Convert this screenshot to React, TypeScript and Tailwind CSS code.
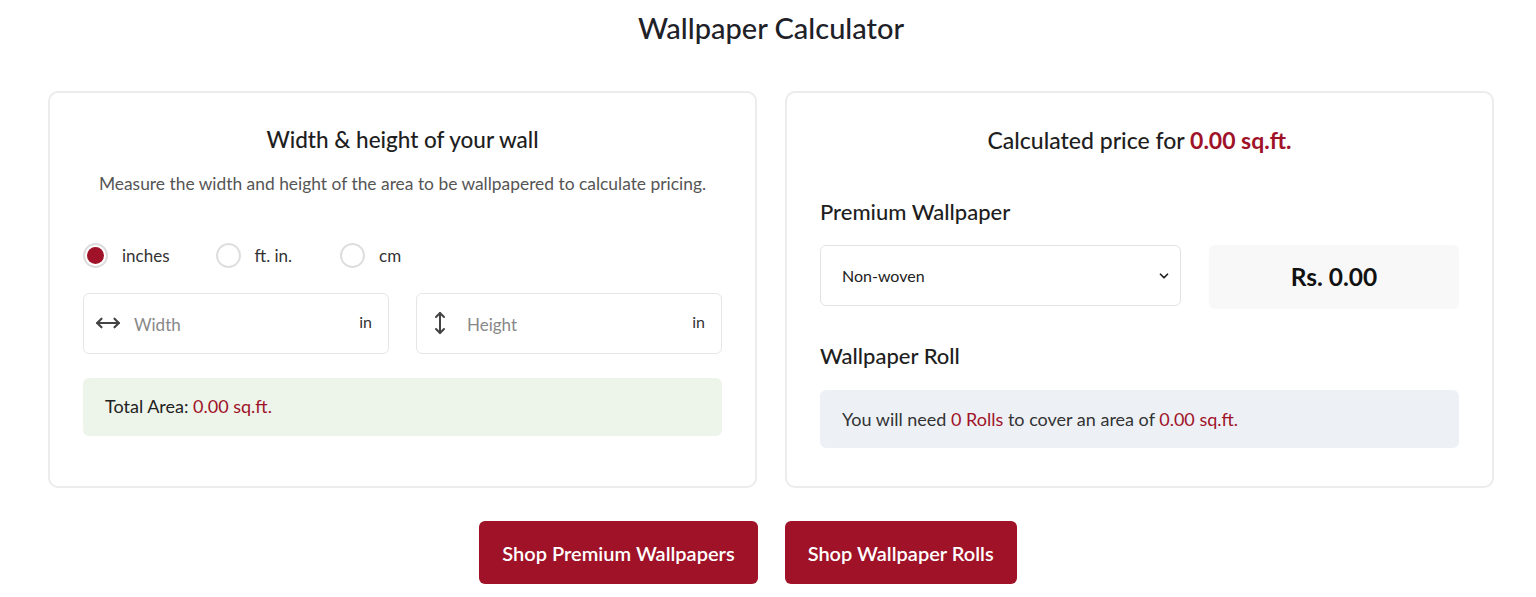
import { MoveHorizontal, MoveVertical, ChevronDown } from 'lucide-react'

const RED = 'text-[#a01228]'

function Radio({ label, checked }: { label: string; checked?: boolean }) {
  return (
    <label className="flex items-center gap-[14px]">
      <span
        className={`w-[25px] h-[25px] rounded-full border-2 flex items-center justify-center ${
          checked ? 'border-[#dcdcdc]' : 'border-[#dedede]'
        }`}
      >
        {checked && <span className="w-[17px] h-[17px] rounded-full bg-[#a01228]" />}
      </span>
      <span className="text-[17px] text-[#333]">{label}</span>
    </label>
  )
}

function DimInput({ placeholder, vertical }: { placeholder: string; vertical?: boolean }) {
  const Icon = vertical ? MoveVertical : MoveHorizontal
  return (
    <div className="flex-1 h-[61px] rounded-md border border-[#e6e6e6] flex items-center pl-[11px] pr-[16px]">
      <Icon className={vertical ? 'w-[24px] h-[24px] text-[#444]' : 'w-[26px] h-[26px] text-[#444]'} strokeWidth={2} />
      <span className={`text-[17px] text-[#888] ${vertical ? 'ml-[15px]' : 'ml-[13px]'} mt-[3px]`}>{placeholder}</span>
      <span className="ml-auto text-[16px] text-[#333] -mt-[3px]">in</span>
    </div>
  )
}

export default function App() {
  return (
    <div className="min-h-screen bg-white font-['Lato','Noto_Sans',sans-serif] text-[#222]">
      <h1 className="pt-[8px] pl-[6px] text-center text-[29px] leading-[40px] font-medium text-[#1e2128]">
        Wallpaper Calculator
      </h1>

      <div className="mt-[43px] pl-[48px] pr-[42px] grid grid-cols-2 gap-[28px]">
        {/* Left card */}
        <div className="rounded-[10px] border-2 border-[#ececec] px-[33px] pt-[33px] pb-[38px]">
          <h2 className="text-center text-[22.5px] leading-[28px] font-medium text-[#1e1e1e]">
            Width &amp; height of your wall
          </h2>
          <p className="mt-[18px] text-center text-[17.4px] leading-[24px] text-[#555]">
            Measure the width and height of the area to be wallpapered to calculate pricing.
          </p>

          <div className="mt-[47px] flex items-center">
            <Radio label="inches" checked />
            <span className="w-[46px]" />
            <Radio label="ft. in." />
            <span className="w-[48px]" />
            <Radio label="cm" />
          </div>

          <div className="mt-[24px] flex gap-[27px]">
            <DimInput placeholder="Width" />
            <DimInput placeholder="Height" vertical />
          </div>

          <div className="mt-[24px] h-[58px] rounded-md bg-[#edf4ea] flex items-center px-[22px] text-[18px] text-[#222]">
            Total Area:&nbsp;<span className={RED}>0.00 sq.ft.</span>
          </div>
        </div>

        {/* Right card */}
        <div className="rounded-[10px] border-2 border-[#ececec] px-[33px] pt-[33px] pb-[38px]">
          <h2 className="text-center text-[23px] leading-[28px] font-medium text-[#1e1e1e]">
            Calculated price for <span className={`font-bold ${RED}`}>0.00 sq.ft.</span>
          </h2>

          <h3 className="mt-[44px] text-[22px] leading-[28px] font-medium text-[#1e1e1e]">Premium Wallpaper</h3>
          <div className="mt-[19px] flex gap-[28px] items-start">
            <div className="w-[361px] h-[61px] rounded-md border border-[#e2e2e2] flex items-center pl-[21px] pr-[9px]">
              <span className="text-[16px] text-[#222]">Non-woven</span>
              <ChevronDown className="ml-auto w-[14px] h-[14px] text-[#222]" strokeWidth={3} />
            </div>
            <div className="flex-1 h-[64px] rounded-md bg-[#f8f8f8] flex items-center justify-center text-[24.5px] font-bold text-[#111]">
              Rs. 0.00
            </div>
          </div>

          <h3 className="mt-[33px] text-[22px] leading-[28px] font-medium text-[#1e1e1e]">Wallpaper Roll</h3>
          <div className="mt-[20px] h-[58px] rounded-md bg-[#edf1f5] flex items-center px-[22px] text-[18px] text-[#333]">
            You will need&nbsp;<span className={RED}>0 Rolls</span>&nbsp;to cover an area of&nbsp;
            <span className={RED}>0.00 sq.ft.</span>
          </div>
        </div>
      </div>

      <div className="mt-[33px] flex justify-center gap-[27px] pr-[40px]">
        <button className="h-[63px] px-[23px] rounded-md bg-[#a01228] text-white text-[20px] font-semibold">
          Shop Premium Wallpapers
        </button>
        <button className="h-[63px] px-[23px] rounded-md bg-[#a01228] text-white text-[20px] font-semibold">
          Shop Wallpaper Rolls
        </button>
      </div>
    </div>
  )
}
